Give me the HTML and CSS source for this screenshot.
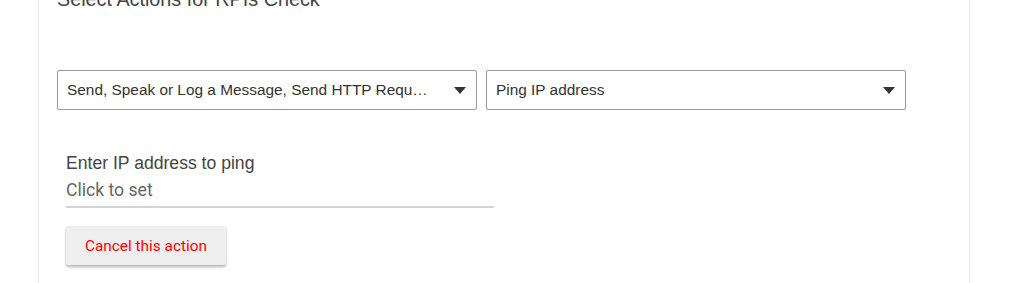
FILE: index.html
```html
<!DOCTYPE html>
<html>
<head>
<meta charset="utf-8">
<link rel="stylesheet" href="styles.css">
</head>
<body>
<div class="card">
  <h2 class="title">Select Actions for RPIs Check</h2>
  <div class="selects">
    <div class="select"><span class="sel-text">Send, Speak or Log a Message, Send HTTP Requ…</span><span class="arrow"></span></div>
    <div class="select"><span class="sel-text">Ping IP address</span><span class="arrow"></span></div>
  </div>
  <div class="field">
    <div class="label">Enter IP address to ping</div>
    <div class="input">Click to set</div>
  </div>
  <button class="cancel">Cancel this action</button>
</div>
</body>
</html>
```
FILE: styles.css
```css
html, body { margin: 0; padding: 0; background: #fff; }
body { font-family: "Liberation Sans", Arial, sans-serif; color: #444; }
.card {
  margin-left: 39px;
  width: 930px;
  height: 300px;
  margin-top: -13px;
  box-sizing: border-box;
  padding: 0 18px;
  box-shadow: 0 0 2px rgba(0,0,0,0.25);
  background: #fff;
}
.title {
  margin: 0;
  font-weight: 400;
  font-size: 19.8px;
  line-height: 24px;
  color: #444;
}
.selects {
  display: flex;
  gap: 9px;
  margin-top: 59px;
}
.select {
  width: 420px;
  height: 40px;
  box-sizing: border-box;
  border: 1px solid #999;
  border-radius: 2px;
  display: flex;
  align-items: center;
  padding: 0 10px 0 9px;
  font-size: 15.4px;
  color: #333;
}
.sel-text { flex: 1; white-space: nowrap; overflow: hidden; }
.arrow {
  width: 0; height: 0;
  border-left: 6.5px solid transparent;
  border-right: 6.5px solid transparent;
  border-top: 7px solid #333;
  margin-right: 0;
}
.field { margin-top: 42px; margin-left: 9px; width: 428px; }
.label { font-size: 17.6px; line-height: 22px; color: #444; }
.input {
  font-family: Roboto, "Liberation Sans", sans-serif;
  font-size: 17.6px;
  color: #666;
  line-height: 22px;
  margin-top: 5px;
  padding-bottom: 5px;
  border-bottom: 2px solid #d3d3d3;
}
.cancel {
  display: block;
  margin-top: 18px;
  margin-left: 9px;
  width: 160px;
  height: 39px;
  border: none;
  border-radius: 2px;
  background: #eee;
  color: #f00;
  font-family: Roboto, "Liberation Sans", sans-serif;
  font-size: 15.4px;
  font-weight: 400;
  box-shadow: 0 2px 3px rgba(0,0,0,0.3);
  padding: 0;
}
```
